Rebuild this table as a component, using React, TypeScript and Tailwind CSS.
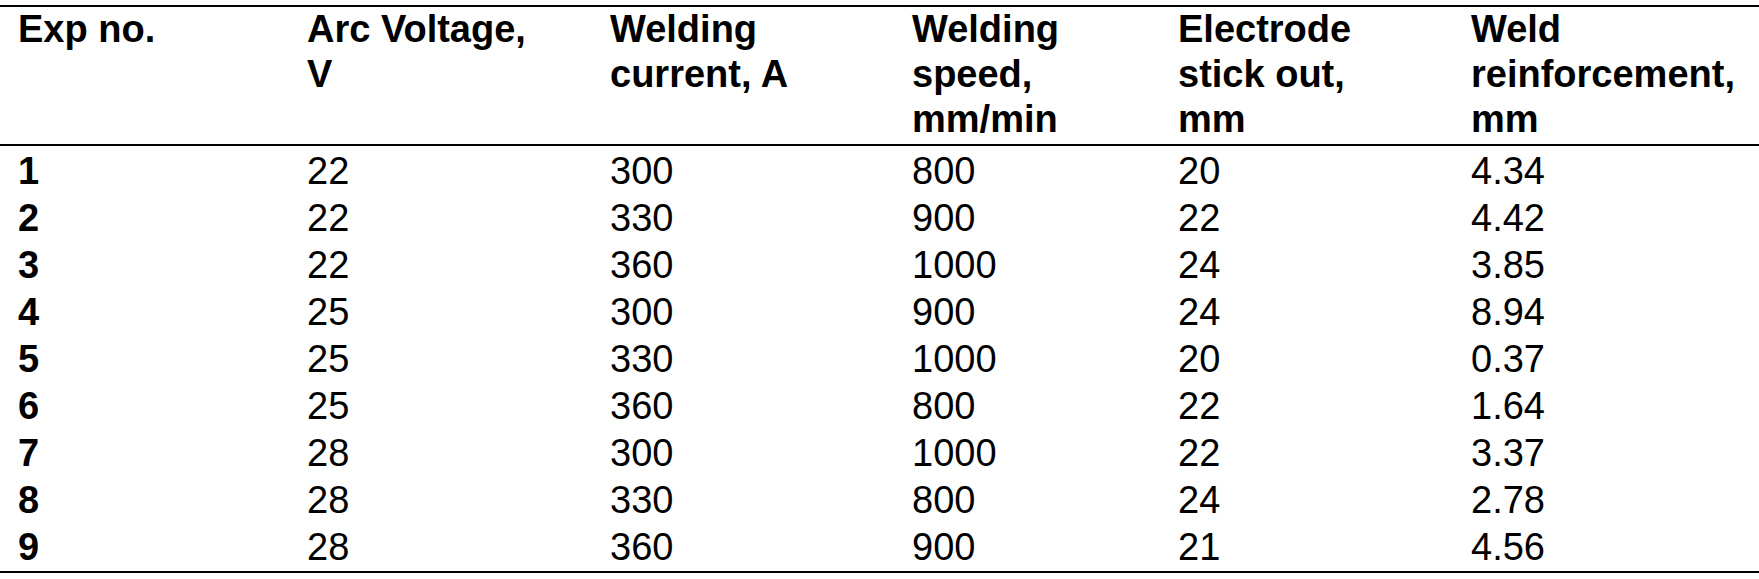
import React from 'react';

const headers: string[][] = [
  ['Exp no.'],
  ['Arc Voltage,', 'V'],
  ['Welding', 'current, A'],
  ['Welding', 'speed,', 'mm/min'],
  ['Electrode', 'stick out,', 'mm'],
  ['Weld', 'reinforcement,', 'mm'],
];

const rows: string[][] = [
  ['1', '22', '300', '800', '20', '4.34'],
  ['2', '22', '330', '900', '22', '4.42'],
  ['3', '22', '360', '1000', '24', '3.85'],
  ['4', '25', '300', '900', '24', '8.94'],
  ['5', '25', '330', '1000', '20', '0.37'],
  ['6', '25', '360', '800', '22', '1.64'],
  ['7', '28', '300', '1000', '22', '3.37'],
  ['8', '28', '330', '800', '24', '2.78'],
  ['9', '28', '360', '900', '21', '4.56'],
];

const cols = 'grid grid-cols-[289px_303px_302px_266px_293px_1fr] pl-[18px]';

const App: React.FC = () => {
  return (
    <div className="w-[1759px] h-[579px] bg-white pt-[5px] text-black text-[38px] font-['Liberation_Sans',Arial,sans-serif]">
      <div className="border-t-2 border-b-2 border-black">
        {/* header */}
        <div className={`${cols} border-b-2 border-black pb-[2px] font-bold leading-[45px]`}>
          {headers.map((lines, i) => (
            <div key={i}>
              {lines.map((l, j) => (
                <div key={j} className="whitespace-nowrap">{l}</div>
              ))}
            </div>
          ))}
        </div>
        {/* body */}
        <div className="pt-[1.5px]">
          {rows.map((r, i) => (
            <div key={i} className={`${cols} h-[47px] leading-[47px]`}>
              {r.map((v, j) => (
                <div key={j} className={j === 0 ? 'font-bold' : ''}>{v}</div>
              ))}
            </div>
          ))}
        </div>
      </div>
    </div>
  );
};

export default App;
